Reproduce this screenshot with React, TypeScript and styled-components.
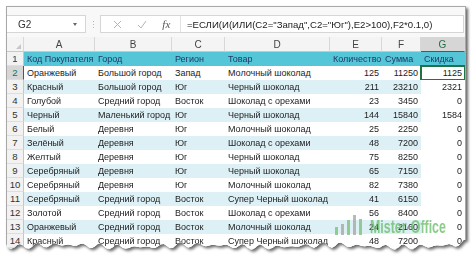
import React from "react";
import styled, { createGlobalStyle } from "styled-components";

const GlobalStyle = createGlobalStyle`
  html, body {
    margin: 0;
    padding: 0;
    background: #ffffff;
  }
  body {
    font-family: "Liberation Sans", Arial, sans-serif;
  }
`;

const COLS = [17, 71, 77, 53, 105, 52, 39, 44];
const LETTERS = ["A", "B", "C", "D", "E", "F", "G"];
const SHEET_W = 460;

// jagged bottom for the torn paper edge
const tornEdge = (() => {
  const pts: string[] = ["0px 0px", `${SHEET_W}px 0px`, `${SHEET_W}px 234px`];
  for (let x = SHEET_W - 2; x >= 0; x -= 3) {
    const y =
      240 +
      1.6 * Math.sin(x * 1.7) +
      1.4 * Math.sin(x * 0.31 + 1) +
      1.2 * Math.sin(x * 0.047 + 2) +
      (x > 450 ? -(x - 450) * 0.4 : 0);
    pts.push(`${x}px ${y.toFixed(1)}px`);
  }
  pts.push("0px 238px");
  return `polygon(${pts.join(", ")})`;
})();

const Page = styled.div`
  padding: 6px 0 0 6px;
`;

const Shadow = styled.div`
  width: ${SHEET_W}px;
  filter: drop-shadow(2px 2px 1.5px rgba(0, 0, 0, 0.6));
`;

const Sheet = styled.div`
  position: relative;
  box-sizing: border-box;
  width: ${SHEET_W}px;
  height: 252px;
  border: 1px solid #a8a8a8;
  border-bottom: none;
  background: #f8f8f8;
  clip-path: ${tornEdge};
  overflow: hidden;
`;

const TopStrip = styled.div`
  height: 8px;
`;

const FormulaRow = styled.div`
  display: flex;
  height: 18px;
  padding-right: 1px;
`;

const NameBox = styled.div`
  box-sizing: border-box;
  width: 79px;
  display: flex;
  align-items: center;
  justify-content: space-between;
  padding: 0 8px 0 11px;
  background: #fff;
  border: 1px solid #d6d6d6;
  border-left: none;
  font-size: 10px;
  color: #333;
`;

const DropArrow = styled.span`
  width: 0;
  height: 0;
  border-left: 2.5px solid transparent;
  border-right: 2.5px solid transparent;
  border-top: 3px solid #666;
`;

const Grip = styled.div`
  width: 14px;
  display: flex;
  flex-direction: column;
  align-items: center;
  justify-content: center;
  gap: 2px;
`;

const Dot = styled.span`
  width: 1px;
  height: 1px;
  background: #b8b8b8;
`;

const FormulaBox = styled.div`
  flex: 1;
  display: flex;
  background: #fff;
  border: 1px solid #d6d6d6;
`;

const Buttons = styled.div`
  box-sizing: border-box;
  width: 80px;
  display: flex;
  align-items: center;
  justify-content: space-around;
  padding: 0 2px 0 4px;
  border-right: 1px solid #e2e2e2;
`;

const Fx = styled.span`
  font-family: "Liberation Serif", "Times New Roman", serif;
  font-style: italic;
  font-size: 11px;
  color: #555;
`;

const FormulaText = styled.div`
  display: flex;
  align-items: center;
  padding-left: 6px;
  font-size: 9.6px;
  color: #222;
  white-space: nowrap;
`;

const Gap = styled.div`
  height: 4px;
`;

const Grid = styled.div`
  display: grid;
  grid-template-columns: ${COLS.map((c) => `${c}px`).join(" ")};
  grid-template-rows: 15px;
  grid-auto-rows: 14px;
  background: #fff;
`;

const ColHead = styled.div<{ $active?: boolean }>`
  display: flex;
  align-items: center;
  justify-content: center;
  font-size: 10px;
  color: ${(p) => (p.$active ? "#217346" : "#444")};
  background: ${(p) => (p.$active ? "#d6d6d6" : "#f4f4f4")};
  border-right: 1px solid #d8d8d8;
  border-bottom: 1px solid ${(p) => (p.$active ? "#217346" : "#c8c8c8")};
  box-sizing: border-box;
`;

const Corner = styled(ColHead)`
  justify-content: flex-end;
  align-items: flex-end;
  padding: 0 2px 2px 0;
`;

const CornerMark = styled.span`
  width: 0;
  height: 0;
  border-left: 5px solid transparent;
  border-bottom: 5px solid #c6c6c6;
`;

const RowHead = styled.div<{ $active?: boolean }>`
  display: flex;
  align-items: center;
  justify-content: center;
  box-sizing: border-box;
  font-size: 9.6px;
  color: ${(p) => (p.$active ? "#217346" : "#333")};
  background: ${(p) => (p.$active ? "#d6d6d6" : "#f2f2f2")};
  border-right: 1px solid ${(p) => (p.$active ? "#217346" : "#c6c6c6")};
  border-bottom: 1px solid #dedede;
`;

type CellKind = "title" | "band" | "plain";

const Cell = styled.div<{ $kind: CellKind; $num?: boolean; $selected?: boolean }>`
  box-sizing: border-box;
  display: flex;
  align-items: center;
  justify-content: ${(p) => (p.$num ? "flex-end" : "flex-start")};
  padding: ${(p) => (p.$num ? "0 3px 0 0" : "0 0 0 3px")};
  font-size: 9px;
  white-space: nowrap;
  overflow: hidden;
  color: ${(p) => (p.$kind === "title" ? "#1f3a68" : "#1c1c1c")};
  background: ${(p) =>
    p.$kind === "title" ? "#55c6d8" : p.$kind === "band" ? "#dcf0f5" : "#ffffff"};
  ${(p) => (p.$selected ? "outline: 2px solid #217346; outline-offset: -1px;" : "")}
`;

const Watermark = styled.div`
  position: absolute;
  left: 327px;
  top: 208px;
  display: flex;
  align-items: flex-end;
  gap: 4px;
  opacity: 0.8;
  white-space: nowrap;
  pointer-events: none;
`;

const Brand = styled.span`
  display: inline-block;
  font-family: "Liberation Sans", Arial, sans-serif;
  font-weight: bold;
  font-size: 18px;
  line-height: 16px;
  white-space: nowrap;
  color: #6fbf6f;
  transform: scaleX(0.69);
  transform-origin: left bottom;
`;

const BrandDash = styled.span`
  color: #9a9a9a;
`;

const header = ["Код Покупателя", "Город", "Регион", "Товар", "Количество", "Сумма", "Скидка"];

const rows: (string | number)[][] = [
  ["Оранжевый", "Большой город", "Запад", "Молочный шоколад", 125, 11250, 1125],
  ["Красный", "Большой город", "Юг", "Черный шоколад", 211, 23210, 2321],
  ["Голубой", "Средний город", "Восток", "Шоколад с орехами", 23, 3450, 0],
  ["Черный", "Маленький город", "Юг", "Черный шоколад", 144, 15840, 1584],
  ["Белый", "Деревня", "Юг", "Молочный шоколад", 25, 2250, 0],
  ["Зелёный", "Деревня", "Юг", "Шоколад с орехами", 48, 7200, 0],
  ["Желтый", "Деревня", "Юг", "Черный шоколад", 75, 8250, 0],
  ["Серебряный", "Деревня", "Юг", "Черный шоколад", 65, 7150, 0],
  ["Серебряный", "Деревня", "Юг", "Молочный шоколад", 82, 7380, 0],
  ["Серебряный", "Средний город", "Восток", "Супер Черный шоколад", 41, 6150, 0],
  ["Золотой", "Средний город", "Восток", "Шоколад с орехами", 56, 8400, 0],
  ["Оранжевый", "Средний город", "Восток", "Молочный шоколад", 24, 2160, 0],
  ["Красный", "Средний город", "Восток", "Супер Черный шоколад", 48, 7200, 0],
];

const LogoBars = () => (
  <svg width="32" height="20" viewBox="0 0 32 20">
    <rect x="1" y="12" width="3" height="8" fill="#7cc47c" />
    <rect x="7" y="9" width="3" height="11" fill="#a8a8a8" />
    <rect x="13" y="5" width="3" height="15" fill="#7cc47c" />
    <rect x="19" y="0" width="3" height="20" fill="#a8a8a8" />
    <rect x="25" y="4" width="3" height="16" fill="#7cc47c" />
  </svg>
);

export default function App() {
  return (
    <>
      <GlobalStyle />
      <Page>
        <Shadow>
          <Sheet>
            <TopStrip />
            <FormulaRow>
              <NameBox>
                G2
                <DropArrow />
              </NameBox>
              <Grip>
                <Dot />
                <Dot />
                <Dot />
              </Grip>
              <FormulaBox>
                <Buttons>
                  <svg width="9" height="9" viewBox="0 0 9 9">
                    <path d="M1 1L8 8M8 1L1 8" stroke="#b4b4b4" strokeWidth="1" />
                  </svg>
                  <svg width="10" height="9" viewBox="0 0 10 9">
                    <path d="M1 5L4 8L9 1" stroke="#b4b4b4" strokeWidth="1" fill="none" />
                  </svg>
                  <Fx>fx</Fx>
                </Buttons>
                <FormulaText>=ЕСЛИ(И(ИЛИ(C2="Запад",C2="Юг"),E2&gt;100),F2*0.1,0)</FormulaText>
              </FormulaBox>
            </FormulaRow>
            <Gap />
            <Grid>
              <Corner>
                <CornerMark />
              </Corner>
              {LETTERS.map((l) => (
                <ColHead key={l} $active={l === "G"}>
                  {l}
                </ColHead>
              ))}

              <RowHead>1</RowHead>
              {header.map((h) => (
                <Cell key={h} $kind="title">
                  {h}
                </Cell>
              ))}

              {rows.map((r, i) => {
                const n = i + 2;
                const band = n % 2 === 1;
                return (
                  <React.Fragment key={n}>
                    <RowHead $active={n === 2}>{n}</RowHead>
                    {r.map((v, j) => (
                      <Cell
                        key={j}
                        $kind={band && j < 6 ? "band" : "plain"}
                        $num={typeof v === "number"}
                        $selected={n === 2 && j === 6}
                      >
                        {v}
                      </Cell>
                    ))}
                  </React.Fragment>
                );
              })}
            </Grid>
            <Watermark>
              <LogoBars />
              <Brand>
                Mister<BrandDash>-</BrandDash>Office
              </Brand>
            </Watermark>
          </Sheet>
        </Shadow>
      </Page>
    </>
  );
}
